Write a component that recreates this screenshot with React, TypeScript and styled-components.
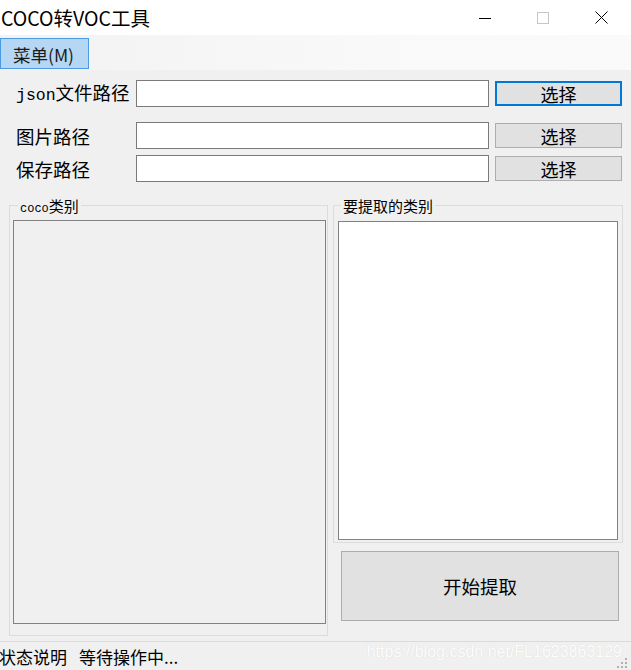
import React from "react";
import styled, { createGlobalStyle } from "styled-components";

const Global = createGlobalStyle`
  html, body { margin: 0; padding: 0; background: #f0f0f0; }
  body { font-family: "Noto Sans CJK SC", "Noto Sans", sans-serif; color: #000; }
  * { box-sizing: border-box; }
`;

const Window = styled.div`
  width: 631px;
  height: 670px;
  display: flex;
  flex-direction: column;
  background: #f0f0f0;
  overflow: hidden;
`;

const TitleBar = styled.div`
  height: 35px;
  flex-shrink: 0;
  background: #ffffff;
  display: flex;
  align-items: center;
`;

const Title = styled.div`
  flex: 1;
  padding-left: 1px;
  font-size: 19.5px;
  line-height: 20px;
  color: #000;
  white-space: nowrap;
`;

const Controls = styled.div`
  display: flex;
  height: 100%;
`;

const ControlCell = styled.div<{ $w: number }>`
  width: ${(p) => p.$w}px;
  height: 100%;
  display: flex;
  align-items: center;
  justify-content: center;
`;

const MenuBar = styled.div`
  height: 35px;
  flex-shrink: 0;
  background: linear-gradient(to right, #f2f2f2, #f9f9f9 60%, #fafafa);
  display: flex;
  align-items: flex-start;
  padding-top: 3px;
`;

const MenuButton = styled.div`
  width: 89px;
  height: 31px;
  background: #b6d7f3;
  border: 1px solid #4c9be2;
  display: flex;
  align-items: center;
  justify-content: center;
  padding-top: 2px;
  padding-right: 2px;
  font-size: 17.5px;
  color: #1a1a1a;
  white-space: nowrap;
`;

const Body = styled.div`
  flex: 1;
  display: flex;
  flex-direction: column;
  padding: 10px 0 5px 0;
  min-height: 0;
`;

const Row = styled.div<{ $mt: number }>`
  display: flex;
  align-items: center;
  height: 27px;
  margin-top: ${(p) => p.$mt}px;
  padding-left: 16px;
`;

const Label = styled.div`
  width: 120px;
  font-size: 18.5px;
  line-height: 20px;
  white-space: nowrap;
  color: #000;
`;

const Latin = styled.span`
  font-family: "Liberation Mono", monospace;
  font-size: 16.5px;
`;

const TextBox = styled.div`
  width: 353px;
  height: 27px;
  background: #ffffff;
  border: 1px solid #7a7a7a;
`;

const PickButton = styled.div<{ $focused?: boolean }>`
  margin-left: 6px;
  width: 127px;
  height: 25px;
  background: #e1e1e1;
  border: 1px solid ${(p) => (p.$focused ? "#0078d7" : "#adadad")};
  box-shadow: ${(p) => (p.$focused ? "inset 0 0 0 1px #0078d7" : "none")};
  display: flex;
  align-items: center;
  justify-content: center;
  font-size: 18px;
  line-height: 20px;
  color: #000;
`;

const Groups = styled.div`
  flex: 1;
  display: flex;
  gap: 5px;
  margin-top: 15px;
  padding-left: 9px;
  min-height: 0;
`;

const Group = styled.fieldset<{ $w: number; $pt: number; $pb: number; $pl: number; $pr: number }>`
  margin: 0;
  width: ${(p) => p.$w}px;
  border: 1px solid #dcdcdc;
  padding: ${(p) => `${p.$pt}px ${p.$pr}px ${p.$pb}px ${p.$pl}px`};
  display: flex;
  flex-direction: column;
  min-width: 0;
  min-height: 0;
`;

const Legend = styled.legend<{ $ml: number }>`
  margin-left: ${(p) => p.$ml}px;
  padding: 0 2px;
  height: 17px;
  font-size: 15px;
  line-height: 17px;
  color: #000;
  white-space: nowrap;
  overflow: visible;
`;

const Small = styled.span`
  font-family: "Liberation Mono", monospace;
  font-size: 12px;
  line-height: 12px;
`;

const ListBox = styled.div<{ $white?: boolean }>`
  flex: 1;
  background: ${(p) => (p.$white ? "#ffffff" : "#f0f0f0")};
  border: 1px solid #828282;
`;

const RightColumn = styled.div`
  display: flex;
  flex-direction: column;
  width: 290px;
`;

const RightGroup = styled(Group)`
  flex: 1;
`;

const LeftGroup = styled(Group)`
  height: 100%;
`;

const StartButton = styled.div`
  margin: 8px 0 15px 8px;
  width: 278px;
  height: 70px;
  flex-shrink: 0;
  background: #e1e1e1;
  border: 1px solid #adadad;
  display: flex;
  align-items: center;
  justify-content: center;
  font-size: 18.5px;
  color: #000;
`;

const StatusBar = styled.div`
  position: relative;
  height: 29px;
  flex-shrink: 0;
  border-top: 1px solid #dadada;
  display: flex;
  align-items: center;
  font-size: 17px;
  color: #000;
`;

const StatusText = styled.span<{ $ml: number }>`
  margin-left: ${(p) => p.$ml}px;
  white-space: nowrap;
`;

const Watermark = styled.span`
  margin-left: auto;
  margin-right: 9px;
  align-self: flex-start;
  margin-top: 1px;
  font-family: "Liberation Sans", Arial, sans-serif;
  font-size: 16px;
  color: rgba(255, 255, 255, 0.95);
  text-shadow: 0 0 1px rgba(160, 160, 160, 0.3);
  white-space: nowrap;
`;

const Grip = styled.svg`
  position: absolute;
  right: 3px;
  bottom: 1px;
`;

export default function App() {
  return (
    <>
      <Global />
      <Window>
        <TitleBar>
          <Title>COCO转VOC工具</Title>
          <Controls>
            <ControlCell $w={58}>
              <svg width="12" height="12" viewBox="0 0 12 12">
                <line x1="0" y1="6.5" x2="12" y2="6.5" stroke="#000" strokeWidth="1" />
              </svg>
            </ControlCell>
            <ControlCell $w={58}>
              <svg width="12" height="12" viewBox="0 0 12 12">
                <rect x="0.5" y="0.5" width="11" height="11" fill="none" stroke="#c6c6c6" strokeWidth="1" />
              </svg>
            </ControlCell>
            <ControlCell $w={59}>
              <svg width="13" height="13" viewBox="0 0 13 13">
                <path d="M0.5 0.5 L12.5 12.5 M12.5 0.5 L0.5 12.5" stroke="#000" strokeWidth="1" fill="none" />
              </svg>
            </ControlCell>
          </Controls>
        </TitleBar>
        <MenuBar>
          <MenuButton>菜单(M)</MenuButton>
        </MenuBar>
        <Body>
          <Row $mt={0}>
            <Label>
              <Latin>json</Latin>文件路径
            </Label>
            <TextBox />
            <PickButton $focused>选择</PickButton>
          </Row>
          <Row $mt={15}>
            <Label>图片路径</Label>
            <TextBox />
            <PickButton>选择</PickButton>
          </Row>
          <Row $mt={6}>
            <Label>保存路径</Label>
            <TextBox />
            <PickButton>选择</PickButton>
          </Row>
          <Groups>
            <LeftGroup $w={319} $pt={6} $pb={11} $pl={3} $pr={1}>
              <Legend $ml={5}>
                <Small>coco</Small>类别
              </Legend>
              <ListBox />
            </LeftGroup>
            <RightColumn>
              <RightGroup $w={290} $pt={7} $pb={2} $pl={4} $pr={4}>
                <Legend $ml={3}>要提取的类别</Legend>
                <ListBox $white />
              </RightGroup>
              <StartButton>开始提取</StartButton>
            </RightColumn>
          </Groups>
        </Body>
        <StatusBar>
          <StatusText $ml={-1}>状态说明</StatusText>
          <StatusText $ml={12}>等待操作中...</StatusText>
          <Watermark>https://blog.csdn.net/FL1623863129</Watermark>
          <Grip width="12" height="12" viewBox="0 0 12 12">
            <rect x="9" y="1" width="2" height="2" fill="#b0b0b0" />
            <rect x="5" y="5" width="2" height="2" fill="#b0b0b0" />
            <rect x="9" y="5" width="2" height="2" fill="#b0b0b0" />
            <rect x="1" y="9" width="2" height="2" fill="#b0b0b0" />
            <rect x="5" y="9" width="2" height="2" fill="#b0b0b0" />
            <rect x="9" y="9" width="2" height="2" fill="#b0b0b0" />
          </Grip>
        </StatusBar>
      </Window>
    </>
  );
}
